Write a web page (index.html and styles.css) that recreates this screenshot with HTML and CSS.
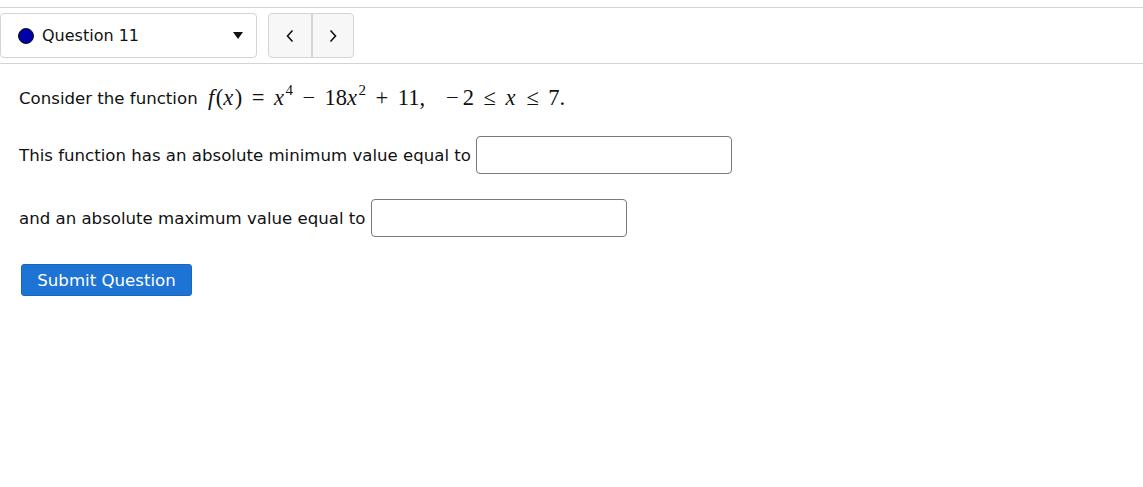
FILE: index.html
```html
<!DOCTYPE html>
<html lang="en">
<head>
    <meta charset="UTF-8">
    <title>Question 11</title>
    <link rel="stylesheet" href="styles.css">
</head>
<body>
    <div class="question-nav">
        <div class="question-select">
            <span class="status-dot"></span>
            <span class="question-label">Question 11</span>
            <span class="caret"></span>
        </div>
        <div class="nav-buttons">
            <button type="button" class="nav-btn" aria-label="Previous">
                <svg width="10" height="14" viewBox="0 0 10 14"><polyline points="7.5,1.5 2.5,7 7.5,12.5" fill="none" stroke="#111" stroke-width="1.6"/></svg>
            </button>
            <button type="button" class="nav-btn" aria-label="Next">
                <svg width="10" height="14" viewBox="0 0 10 14"><polyline points="2.5,1.5 7.5,7 2.5,12.5" fill="none" stroke="#111" stroke-width="1.6"/></svg>
            </button>
        </div>
    </div>

    <div class="question-body">
        <div class="row intro">
            <span>Consider the function&nbsp;</span>
            <span class="math"><i>f</i>(<i>x</i>)<span class="op">=</span><i>x</i><sup>4</sup><span class="op">−</span>18<i>x</i><sup>2</sup><span class="op">+</span>11,<span class="quad"></span>−<span class="thin"></span>2<span class="op">≤</span><i>x</i><span class="op">≤</span>7.</span>
        </div>

        <div class="row">
            <span>This function has an absolute minimum value equal to&nbsp;</span>
            <input type="text" class="answer">
        </div>

        <div class="row">
            <span>and an absolute maximum value equal to&nbsp;</span>
            <input type="text" class="answer">
        </div>

        <button type="button" class="submit-btn">Submit Question</button>
    </div>
</body>
</html>
```

FILE: styles.css
```css
body {
    margin: 0;
    font-family: "DejaVu Sans", Tahoma, sans-serif;
    font-size: 16.6px;
    color: #111;
    background: #fff;
}
.question-nav {
    display: flex;
    align-items: center;
    margin-top: 7px;
    padding: 5px 0;
    border-top: 1px solid #d4d4d4;
    border-bottom: 1px solid #d4d4d4;
}
.question-select {
    display: flex;
    align-items: center;
    box-sizing: border-box;
    width: 257px;
    height: 45px;
    padding: 0 12px 0 17px;
    border: 1px solid #d4d4d4;
    border-radius: 4px;
    background: #fff;
    font-size: 16px;
}
.status-dot {
    width: 14px;
    height: 14px;
    border: 1px solid #111;
    border-radius: 50%;
    background: #0000a8;
    margin-right: 8px;
}
.question-label {
    flex: 1;
}
.caret {
    width: 0;
    height: 0;
    border-left: 5px solid transparent;
    border-right: 5px solid transparent;
    border-top: 7px solid #111;
    margin-right: 1px;
}
.nav-buttons {
    display: flex;
    margin-left: 11px;
    border: 1px solid #d4d4d4;
    border-radius: 4px;
    background: #f7f7f7;
    height: 43px;
}
.nav-btn {
    display: flex;
    align-items: center;
    justify-content: center;
    width: 42px;
    border: none;
    background: transparent;
    padding: 0;
    cursor: pointer;
}
.nav-btn + .nav-btn {
    border-left: 2px solid #d4d4d4;
}
.question-body {
    padding-left: 19px;
}
.row {
    display: flex;
    align-items: center;
    white-space: nowrap;
    height: 38px;
    margin-top: 25px;
}
.row.intro {
    margin-top: 15px;
    margin-bottom: -6px;
}
.math {
    font-family: "Liberation Serif", "Times New Roman", serif;
    font-size: 22.5px;
    margin-left: 5px;
}
.math i {
    font-style: italic;
    padding-right: 1.5px;
}
.math sup {
    font-size: 15px;
    vertical-align: 10px;
    line-height: 0;
}
.op {
    padding: 0 9.5px;
}
.quad {
    display: inline-block;
    width: 21px;
}
.thin {
    display: inline-block;
    width: 4px;
}
.answer {
    box-sizing: border-box;
    width: 256px;
    height: 38px;
    border: 1px solid #7a7a7a;
    border-radius: 4px;
    padding: 4px 8px;
    font-size: 16px;
}
.submit-btn {
    display: block;
    margin-top: 27px;
    margin-left: 2px;
    width: 171px;
    height: 32px;
    background: #1e74d4;
    color: #fff;
    border: 1px solid #1a66bb;
    border-radius: 3px;
    font-family: "DejaVu Sans", Tahoma, sans-serif;
    font-size: 16.6px;
    padding: 0;
}
```
